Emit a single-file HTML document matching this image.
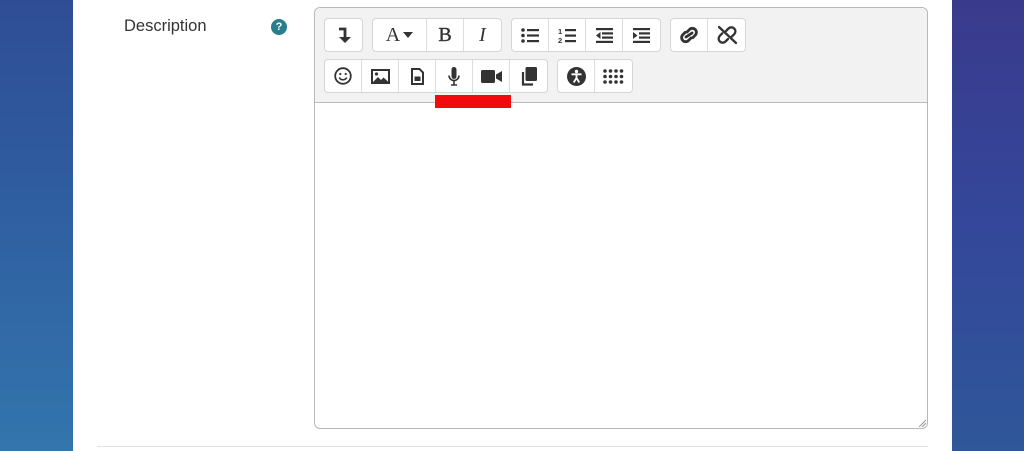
<!DOCTYPE html>
<html><head><meta charset="utf-8"><style>
*{margin:0;padding:0;box-sizing:border-box}
body{width:1024px;height:451px;overflow:hidden;position:relative;background:#fff;font-family:"Liberation Sans",sans-serif}
.l{position:absolute;left:0;top:0;width:73px;height:451px;background:linear-gradient(180deg,#2f4d95 0%,#2f5c9f 40%,#3375ad 100%)}
.r{position:absolute;left:952px;top:0;width:72px;height:451px;background:linear-gradient(180deg,#3a3a8c 0%,#34479a 50%,#2f5799 100%)}
.lab{position:absolute;left:124px;top:17px;font-size:16.5px;color:#333}
.help{position:absolute;left:271px;top:19px;width:16px;height:16px;border-radius:50%;background:#2a7d8c;color:#fff;font-size:11px;font-weight:bold;text-align:center;line-height:16px}
.ed{position:absolute;left:314px;top:7px;width:614px;height:422px;border:1px solid #b8b8b8;border-radius:6px;overflow:hidden;background:#fff}
.tb{position:absolute;left:0;top:0;width:100%;height:95px;background:#f2f2f2;border-bottom:1px solid #bbb}
.g{position:absolute;height:34px;display:flex;border:1px solid #d6d6d6;border-radius:4px;background:#fff;overflow:hidden}
.g div{width:37px;height:100%;border-right:1px solid #ddd;display:flex;align-items:center;justify-content:center}
.g div:last-child{border-right:none}
svg{display:block}
.red{position:absolute;left:435px;top:95px;width:76px;height:13px;background:#f00c0c}
.hr{position:absolute;left:97px;top:446px;width:831px;height:1px;background:#e3e3e3}
.grip{position:absolute;right:1px;bottom:1px}
.sf{font-family:'Liberation Serif',serif;font-size:20px;color:#333}
</style></head><body>
<div class="l"></div><div class="r"></div>
<div class="lab">Description</div>
<div class="help">?</div>
<div class="ed"><div class="tb">
<div class="g" style="left:9px;top:10px"><div><svg width="14" height="18" viewBox="0 0 14 18"><path d="M2 3h6v10" stroke="#333" stroke-width="2.8" fill="none"/><path d="M2 11h12l-6 6z" fill="#333"/></svg></div></div>
<div class="g" style="left:57px;top:10px"><div style="width:54px" class="sf">A<svg width="10" height="6" style="margin-left:3px"><path d="M0 0h10l-5 6z" fill="#333"/></svg></div><div class="sf" style="-webkit-text-stroke:0.4px #333">B</div><div class="sf" style="font-style:italic">I</div></div>
<div class="g" style="left:196px;top:10px">
<div><svg width="18" height="15"><g fill="#333"><circle cx="2" cy="2" r="1.8"/><circle cx="2" cy="7.5" r="1.8"/><circle cx="2" cy="13" r="1.8"/><rect x="6" y="1" width="12" height="2.2"/><rect x="6" y="6.4" width="12" height="2.2"/><rect x="6" y="12" width="12" height="2.2"/></g></svg></div>
<div><svg width="18" height="17"><g fill="#333"><text x="0" y="7" font-size="7.5" font-family="Liberation Sans" font-weight="bold">1</text><text x="0" y="16" font-size="7.5" font-family="Liberation Sans" font-weight="bold">2</text><rect x="7" y="2" width="11" height="2.2"/><rect x="7" y="7.5" width="11" height="2.2"/><rect x="7" y="13" width="11" height="2.2"/></g></svg></div>
<div><svg width="17" height="15"><g fill="#333"><rect x="0" y="0" width="17" height="2.2"/><rect x="6" y="4.3" width="11" height="2.2"/><rect x="6" y="8.5" width="11" height="2.2"/><rect x="0" y="12.8" width="17" height="2.2"/><path d="M0 7.5l4.5-3.5v7z"/></g></svg></div>
<div><svg width="17" height="15"><g fill="#333"><rect x="0" y="0" width="17" height="2.2"/><rect x="6" y="4.3" width="11" height="2.2"/><rect x="6" y="8.5" width="11" height="2.2"/><rect x="0" y="12.8" width="17" height="2.2"/><path d="M4.5 7.5l-4.5-3.5v7z"/></g></svg></div>
</div>
<div class="g" style="left:355px;top:10px">
<div><svg width="22" height="18" viewBox="0 0 22 18"><g stroke="#333" stroke-width="2.8" fill="none" stroke-linecap="round"><path d="M9 6l2.5-2.5a4 4 0 0 1 5.7 5.7l-2.5 2.5"/><path d="M13 12l-2.5 2.5a4 4 0 0 1-5.7-5.7l2.5-2.5"/><path d="M8 11l6-4"/></g></svg></div>
<div><svg width="22" height="20" viewBox="0 0 22 20"><g stroke="#333" stroke-width="2.3" fill="none" stroke-linecap="round"><path d="M10 6l2.5-2.5a4 4 0 0 1 5.7 5.7l-2.5 2.5"/><path d="M12 14l-2.5 2.5a4 4 0 0 1-5.7-5.7l2.5-2.5"/><path d="M3 2l17 16"/></g></svg></div>
</div>
<div class="g" style="left:9px;top:51px">
<div><svg width="18" height="18"><circle cx="9" cy="9" r="7.8" stroke="#333" stroke-width="1.8" fill="none"/><circle cx="6.3" cy="7" r="1.1" fill="#333"/><circle cx="11.7" cy="7" r="1.1" fill="#333"/><path d="M5.2 10.5a4.3 4.3 0 0 0 7.6 0" stroke="#333" stroke-width="1.6" fill="none"/></svg></div>
<div><svg width="19" height="15"><rect x="1" y="1" width="17" height="13" stroke="#333" stroke-width="2" fill="none"/><path d="M2 13l5-5 3 3 2.5-2.5 5 4.5z" fill="#333"/><circle cx="5.5" cy="5" r="1.6" fill="#333"/></svg></div>
<div><svg width="13" height="17"><path d="M1 1h7.5l3.5 3.5v11.5H1z" stroke="#333" stroke-width="2" fill="none"/><rect x="3.5" y="8.5" width="6" height="4.5" fill="#333"/></svg></div>
<div><svg width="12" height="19"><rect x="3.5" y="0" width="5" height="12" rx="2.5" fill="#333"/><path d="M1 8.5a5 5 0 0 0 10 0M6 14v4M3 18h6" stroke="#333" stroke-width="1.6" fill="none"/></svg></div>
<div><svg width="21" height="15"><rect x="0" y="1" width="14" height="13" rx="1.5" fill="#333"/><path d="M15 5.5l6-3.5v11l-6-3.5z" fill="#333"/></svg></div>
<div><svg width="17" height="19"><rect x="5.5" y="0" width="11.5" height="14" rx="1.5" fill="#333"/><path d="M3 5v12.5h10" stroke="#333" stroke-width="2.2" fill="none"/></svg></div>
</div>
<div class="g" style="left:242px;top:51px">
<div><svg width="19" height="19"><circle cx="9.5" cy="9.5" r="9.5" fill="#333"/><circle cx="9.5" cy="4.5" r="1.7" fill="#fff"/><path d="M4.5 7.3h10M9.5 7.3v4M9.5 11l-2.8 4.5M9.5 11l2.8 4.5" stroke="#fff" stroke-width="1.8" fill="none"/></svg></div>
<div><svg width="21" height="15"><g fill="#333"><circle cx="2" cy="2" r="1.8"/><circle cx="7.5" cy="2" r="1.8"/><circle cx="13" cy="2" r="1.8"/><circle cx="18.5" cy="2" r="1.8"/><circle cx="2" cy="7.5" r="1.8"/><circle cx="7.5" cy="7.5" r="1.8"/><circle cx="13" cy="7.5" r="1.8"/><circle cx="18.5" cy="7.5" r="1.8"/><circle cx="2" cy="13" r="1.8"/><circle cx="7.5" cy="13" r="1.8"/><circle cx="13" cy="13" r="1.8"/><circle cx="18.5" cy="13" r="1.8"/></g></svg></div>
</div>
</div>
<svg class="grip" width="8" height="8"><path d="M1 8L8 1M4 8L8 4" stroke="#999" stroke-width="1"/></svg>
</div>
<div class="red"></div>
<div class="hr"></div>
</body></html>
